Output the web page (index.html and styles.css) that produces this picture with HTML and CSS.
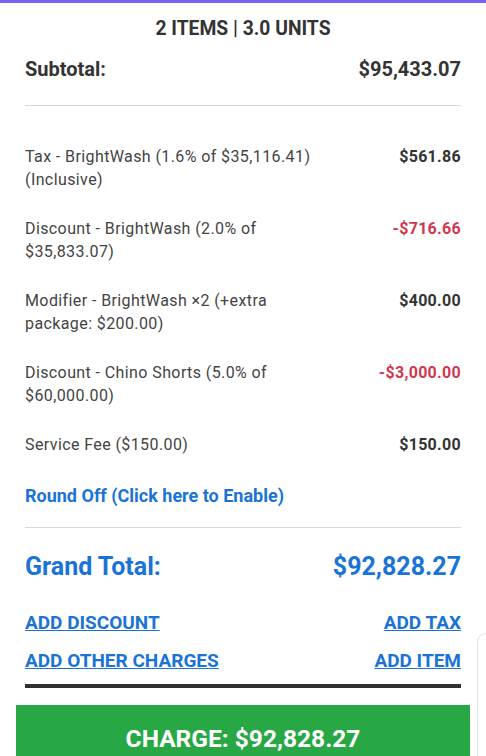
FILE: index.html
```html
<!DOCTYPE html>
<html>
<head>
<meta charset="utf-8">
<link rel="stylesheet" href="styles.css">
</head>
<body>
<div class="topbar"></div>
<div class="summary">
  <div class="count">2 ITEMS | 3.0 UNITS</div>
  <div class="row subtotal"><span>Subtotal:</span><span>$95,433.07</span></div>
  <div class="divider"></div>
  <div class="lines">
    <div class="line"><span class="desc">Tax - BrightWash (1.6% of $35,116.41) (Inclusive)</span><span class="amt">$561.86</span></div>
    <div class="line"><span class="desc">Discount - BrightWash (2.0% of $35,833.07)</span><span class="amt neg">-$716.66</span></div>
    <div class="line"><span class="desc">Modifier - BrightWash ×2 (+extra package: $200.00)</span><span class="amt">$400.00</span></div>
    <div class="line"><span class="desc">Discount - Chino Shorts (5.0% of $60,000.00)</span><span class="amt neg">-$3,000.00</span></div>
    <div class="line"><span class="desc">Service Fee ($150.00)</span><span class="amt">$150.00</span></div>
  </div>
  <div class="roundoff">Round Off (Click here to Enable)</div>
  <div class="divider d2"></div>
  <div class="row grand"><span>Grand Total:</span><span>$92,828.27</span></div>
  <div class="actions">
    <a class="link">ADD DISCOUNT</a><a class="link">ADD TAX</a>
    <a class="link">ADD OTHER CHARGES</a><a class="link">ADD ITEM</a>
  </div>
  <div class="thickbar"></div>
</div>
<div class="charge">CHARGE: $92,828.27</div>
<div class="sidecard"></div>
</body>
</html>
```
FILE: styles.css
```css
html, body {
  margin: 0;
  padding: 0;
  background: #fff;
  font-family: Roboto, "Liberation Sans", sans-serif;
  color: #333;
  overflow: hidden;
  height: 756px;
}
.topbar {
  height: 3px;
  background: #7b61ee;
}
.summary {
  padding: 0 25px;
}
.count {
  text-align: center;
  font-weight: 700;
  font-size: 19.3px;
  line-height: 20px;
  padding-top: 16px;
  color: #333;
}
.row {
  display: flex;
  justify-content: space-between;
  font-weight: 700;
}
.subtotal {
  font-size: 20px;
  line-height: 20px;
  margin-top: 20px;
}
.divider {
  height: 1px;
  background: #d9d9d9;
  margin-top: 26px;
}
.lines {
  display: flex;
  flex-direction: column;
  gap: 26px;
  margin-top: 39px;
}
.line {
  display: flex;
  justify-content: space-between;
  align-items: flex-start;
  font-size: 16px;
  letter-spacing: 0.4px;
  line-height: 23px;
}
.desc {
  max-width: 300px;
  color: #444;
}
.amt {
  font-weight: 700;
  color: #333;
  letter-spacing: 0.3px;
}
.amt.neg {
  color: #d0384f;
}
.roundoff {
  margin-top: 30px;
  font-size: 18px;
  line-height: 20px;
  font-weight: 700;
  color: #1a73d6;
}
.d2 {
  margin-top: 21px;
}
.grand {
  font-size: 25px;
  line-height: 28px;
  color: #1a73d6;
  margin-top: 25px;
}
.actions {
  display: grid;
  grid-template-columns: 1fr auto;
  row-gap: 18px;
  margin-top: 32px;
}
.link {
  font-size: 19px;
  line-height: 20px;
  font-weight: 700;
  color: #1a73d6;
  text-decoration: underline;
}
.actions .link:nth-child(2n) {
  text-align: right;
}
.thickbar {
  height: 4px;
  background: #2f3133;
  margin-top: 13px;
}
.charge {
  margin: 17px 16px 0;
  height: 30px;
  background: #28a745;
  color: #fff;
  font-weight: 700;
  font-size: 24.5px;
  line-height: 26px;
  text-align: center;
  padding-top: 21px;
}
.sidecard {
  position: absolute;
  left: 477px;
  top: 633px;
  width: 8px;
  height: 122px;
  border: 1px solid #e2e2e2;
  border-right: none;
  border-bottom: none;
  border-radius: 12px 0 0 0;
  background: #fff;
}
```
